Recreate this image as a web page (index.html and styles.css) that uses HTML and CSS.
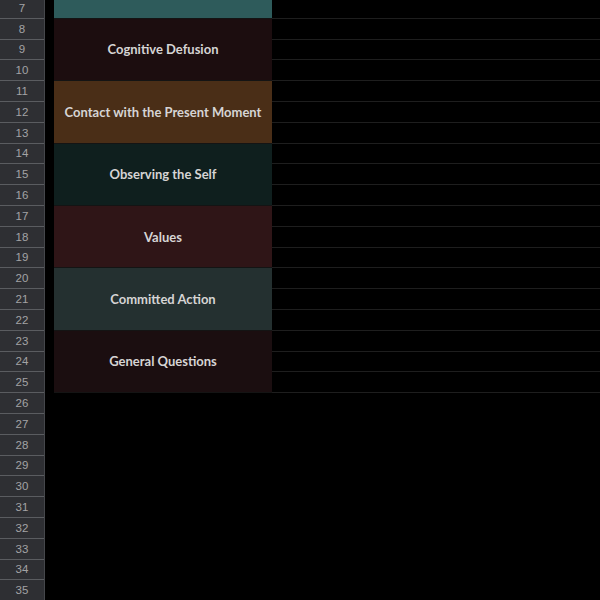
FILE: index.html
```html
<!DOCTYPE html>
<html lang="en">
<head>
  <meta charset="UTF-8" />
  <title>ACT Processes</title>
  <link rel="stylesheet" href="styles.css">
</head>
<body>
  <div class="sheet">
    <!-- row numbers -->
    <div class="heads">
      <div class="head">7</div>
      <div class="head">8</div>
      <div class="head">9</div>
      <div class="head">10</div>
      <div class="head">11</div>
      <div class="head">12</div>
      <div class="head">13</div>
      <div class="head">14</div>
      <div class="head">15</div>
      <div class="head">16</div>
      <div class="head">17</div>
      <div class="head">18</div>
      <div class="head">19</div>
      <div class="head">20</div>
      <div class="head">21</div>
      <div class="head">22</div>
      <div class="head">23</div>
      <div class="head">24</div>
      <div class="head">25</div>
      <div class="head">26</div>
      <div class="head">27</div>
      <div class="head">28</div>
      <div class="head">29</div>
      <div class="head">30</div>
      <div class="head">31</div>
      <div class="head">32</div>
      <div class="head">33</div>
      <div class="head">34</div>
      <div class="head">35</div>
    </div>

    <!-- merged section cells -->
    <div class="blocks">
      <div class="block single teal"></div>
      <div class="block defusion">Cognitive Defusion</div>
      <div class="block present">Contact with the Present Moment</div>
      <div class="block self">Observing the Self</div>
      <div class="block values">Values</div>
      <div class="block action">Committed Action</div>
      <div class="block general">General Questions</div>
    </div>

    <!-- empty cells to the right -->
    <div class="empty">
      <div class="cell"></div><div class="cell"></div><div class="cell"></div>
      <div class="cell"></div><div class="cell"></div><div class="cell"></div>
      <div class="cell"></div><div class="cell"></div><div class="cell"></div>
      <div class="cell"></div><div class="cell"></div><div class="cell"></div>
      <div class="cell"></div><div class="cell"></div><div class="cell"></div>
      <div class="cell"></div><div class="cell"></div><div class="cell"></div>
      <div class="cell"></div>
    </div>
  </div>
</body>
</html>
```

FILE: styles.css
```css
* {
  box-sizing: border-box;
}

body {
  margin: 0;
  background-color: #000;
  font-family: 'Lato', 'Liberation Sans', sans-serif;
  overflow: hidden;
}

.sheet {
  display: flex;
  align-items: flex-start;
  margin-top: -2px;
}

/* Row number column */
.heads {
  width: 45px;
  display: flex;
  flex-direction: column;
  background-color: #2e2f33;
  border-right: 1px solid #45474b;
}

.head {
  height: 20.8px;
  border-bottom: 1px solid #5a5c60;
  display: flex;
  align-items: center;
  justify-content: center;
  font-family: 'Liberation Sans', Arial, sans-serif;
  font-size: 11.5px;
  color: #a3a3a5;
}

/* Merged cells */
.blocks {
  width: 218px;
  margin-left: 9px;
  display: flex;
  flex-direction: column;
}

.block {
  height: 62.4px;
  border-bottom: 1px solid #141414;
  display: flex;
  align-items: center;
  justify-content: center;
  font-size: 13px;
  font-weight: 700;
  color: #d6d4d4;
}

.block.single {
  height: 20.8px;
}

.teal { background-color: #2e5b5b; }
.defusion { background-color: #1c0d0f; }
.present { background-color: #4a2e17; }
.self { background-color: #0f1f1e; }
.values { background-color: #2f1517; }
.action { background-color: #243030; }
.general { background-color: #1b0e10; }

/* Empty grid to the right */
.empty {
  flex: 1;
  display: flex;
  flex-direction: column;
}

.cell {
  height: 20.8px;
  border-bottom: 1px solid #1e1e1e;
}
```
